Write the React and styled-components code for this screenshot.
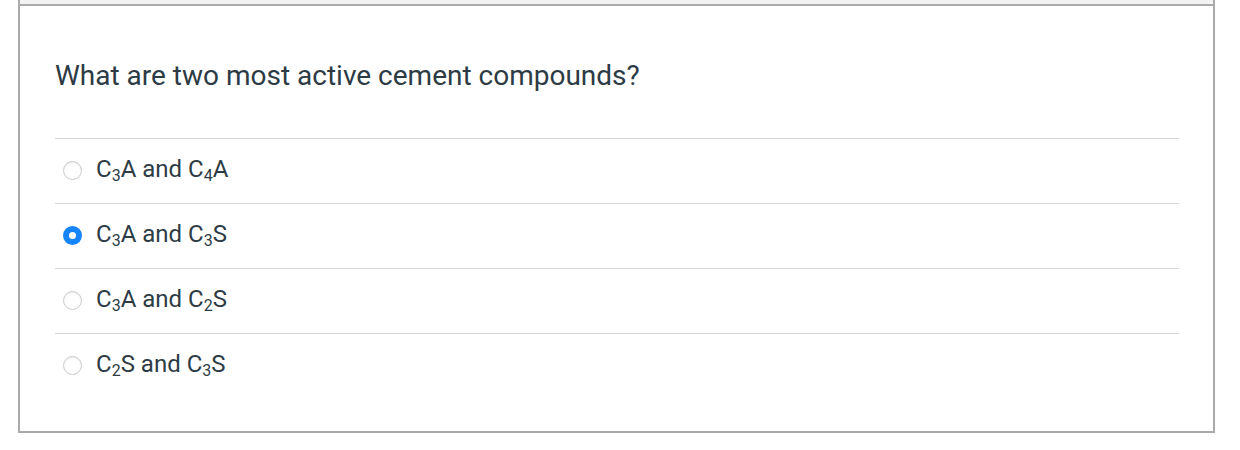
import styled, { createGlobalStyle } from 'styled-components';

const GlobalStyle = createGlobalStyle`
  html, body {
    margin: 0;
    padding: 0;
    background: #ffffff;
  }
  body {
    font-family: Roboto, "Liberation Sans", Arial, sans-serif;
    color: #2d3b45;
  }
`;

const Page = styled.div`
  padding: 0 25px 0 18px;
  width: 1240px;
  box-sizing: border-box;
`;

const QuestionCard = styled.div`
  border: 2px solid #aaaaaa;
  border-top: none;
  background: #fff;
`;

const CardHeader = styled.div`
  height: 4px;
  background: #f3f3f3;
  border-bottom: 2px solid #aaaaaa;
`;

const CardBody = styled.div`
  padding: 0 34px 33px 35px;
`;

const QuestionText = styled.p`
  margin: 0;
  padding-top: 53px;
  font-size: 28px;
  line-height: 34px;
  color: #2d3b45;
`;

const AnswerList = styled.div`
  display: flex;
  flex-direction: column;
  margin-top: 45px;
`;

const AnswerRow = styled.label`
  display: flex;
  align-items: center;
  gap: 14px;
  height: 65px;
  box-sizing: border-box;
  padding: 0 0 4px 8px;
  border-top: 1px solid #d6d6d6;
  font-size: 24px;
  line-height: 30px;
  color: #2d3b45;
  cursor: pointer;
`;

const Radio = styled.span`
  width: 19px;
  height: 19px;
  border-radius: 50%;
  box-sizing: border-box;
  flex: none;
  margin-top: 3px;
  background: ${(p) => (p.$checked ? '#1685fb' : '#fff')};
  border: ${(p) => (p.$checked ? '6px solid #1685fb' : '1px solid #cbcbcb')};
  box-shadow: ${(p) => (p.$checked ? 'none' : 'inset 0 1px 2px rgba(0,0,0,0.08)')};
  position: relative;
  &::after {
    content: '';
    display: ${(p) => (p.$checked ? 'block' : 'none')};
    position: absolute;
    inset: 0;
    border-radius: 50%;
    background: #fff;
  }
`;

const Sub = styled.sub`
  font-size: 16px;
  line-height: 0;
  vertical-align: -4px;
`;

const Chem = ({ el, n }) => (
  <>
    {el[0]}
    <Sub>{n}</Sub>
    {el.slice(1)}
  </>
);

const answers = [
  { a: ['CA', 3], b: ['CA', 4] },
  { a: ['CA', 3], b: ['CS', 3], checked: true },
  { a: ['CA', 3], b: ['CS', 2] },
  { a: ['CS', 2], b: ['CS', 3] },
];

export default function App() {
  return (
    <>
      <GlobalStyle />
      <Page>
        <QuestionCard>
          <CardHeader />
          <CardBody>
            <QuestionText>What are two most active cement compounds?</QuestionText>
            <AnswerList>
              {answers.map((ans, i) => (
                <AnswerRow key={i}>
                  <Radio $checked={ans.checked} />
                  <span>
                    <Chem el={ans.a[0]} n={ans.a[1]} /> and <Chem el={ans.b[0]} n={ans.b[1]} />
                  </span>
                </AnswerRow>
              ))}
            </AnswerList>
          </CardBody>
        </QuestionCard>
      </Page>
    </>
  );
}
